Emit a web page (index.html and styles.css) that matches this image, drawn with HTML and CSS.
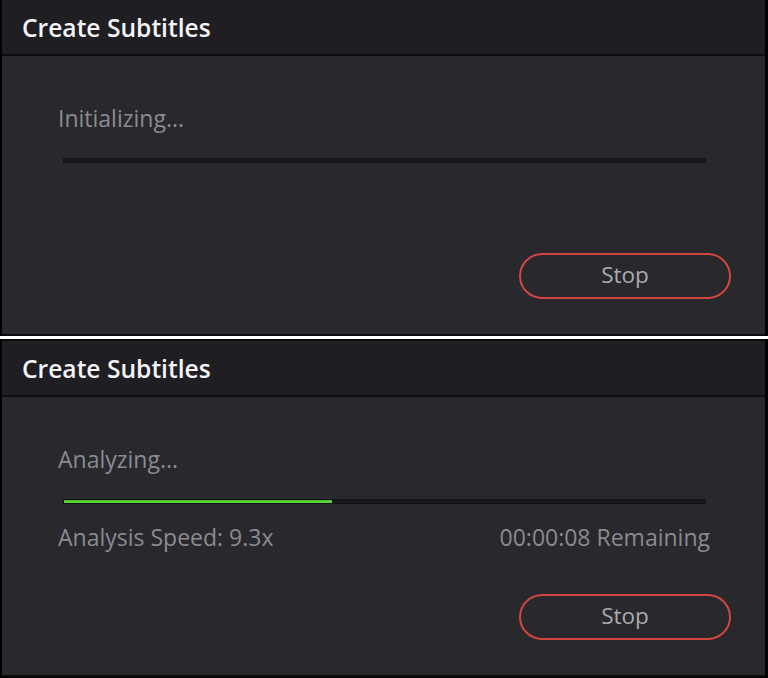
FILE: index.html
```html
<!DOCTYPE html>
<html lang="en">
<head>
<meta charset="utf-8">
<title>Create Subtitles</title>
<link rel="stylesheet" href="styles.css">
</head>
<body>
<div class="frame">
  <section class="panel panel-first">
    <header class="panel-header"><h1 class="panel-title">Create Subtitles</h1></header>
    <div class="panel-body">
      <div class="status">Initializing...</div>
      <div class="progress"><div class="progress-fill" style="width:0%"></div></div>
      <div class="info-row"></div>
      <div class="actions"><button class="stop-btn">Stop</button></div>
    </div>
  </section>
  <div class="separator"></div>
  <section class="panel">
    <header class="panel-header"><h1 class="panel-title">Create Subtitles</h1></header>
    <div class="panel-body">
      <div class="status">Analyzing...</div>
      <div class="progress"><div class="progress-fill" style="width:41.8%"></div></div>
      <div class="info-row">
        <span class="info">Analysis Speed: 9.3x</span>
        <span class="info">00:00:08 Remaining</span>
      </div>
      <div class="actions"><button class="stop-btn">Stop</button></div>
    </div>
  </section>
</div>
</body>
</html>
```

FILE: styles.css
```css
* { box-sizing: border-box; }
html, body {
  margin: 0;
  padding: 0;
  background: #000;
  width: 768px;
  height: 678px;
  overflow: hidden;
  font-family: "Open Sans", "Noto Sans", "DejaVu Sans", sans-serif;
}
.frame {
  display: flex;
  flex-direction: column;
}
.panel {
  margin: 0 3px 0 2px;
  border-top: 2px solid #0c0c0e;
  border-bottom: 2px solid #0c0c0e;
  background: #28282d;
}
.panel-first {
  border-top: 0;
}
.panel-header {
  height: 56px;
  background: #1f1f23;
  border-bottom: 2px solid #0e0e10;
  display: flex;
  align-items: center;
  padding-left: 20px;
}
.panel-title {
  margin: 0;
  font-size: 24.6px;
  font-weight: 600;
  color: #f4f4f6;
  line-height: 1;
  padding-top: 2px;
}
.panel-body {
  height: 278px;
  display: flex;
  flex-direction: column;
  padding: 47px 0 0 56px;
}
.status {
  font-size: 23px;
  line-height: 30px;
  color: #8b8b8f;
}
.progress {
  margin: 25px 59px 0 5px;
  height: 5px;
  background: #18181a;
  border: 1px solid #121214;
  border-radius: 1px;
}
.progress-fill {
  height: 100%;
  background: #5bd43a;
  border-top: 1px solid #4cbc2e;
}
.info-row {
  display: flex;
  justify-content: space-between;
  margin: 18px 55px 0 0;
  height: 30px;
}
.info {
  font-size: 23px;
  line-height: 30px;
  color: #8b8b8f;
}
.actions {
  margin-top: auto;
  display: flex;
  justify-content: flex-end;
  padding: 0 34px 35px 0;
}
.stop-btn {
  width: 212px;
  height: 46px;
  border: 2px solid #d2463f;
  border-radius: 23px;
  background: transparent;
  color: #ababaf;
  font-family: inherit;
  font-size: 22.5px;
  line-height: 1;
  padding: 0 0 2px;
}
.separator {
  height: 3px;
  background: #fff;
}
```
